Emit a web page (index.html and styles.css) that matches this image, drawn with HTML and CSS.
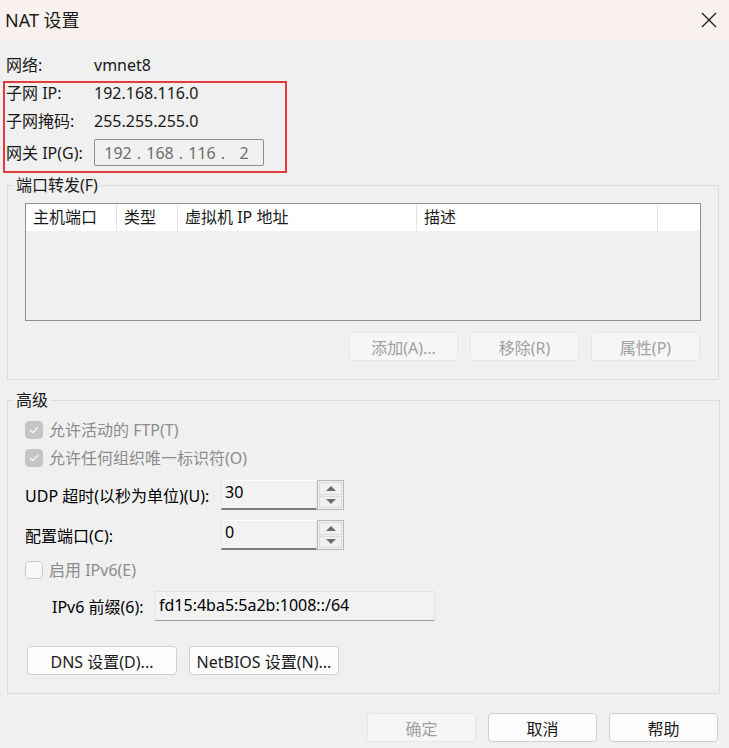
FILE: index.html
```html
<!DOCTYPE html>
<html lang="zh-CN">
<head>
    <meta charset="UTF-8">
    <meta name="viewport" content="width=device-width, initial-scale=1.0">
    <title>NAT 设置</title>
    <link rel="stylesheet" href="styles.css">
</head>
<body>
    <div class="dialog">
        <header class="titlebar">
            <span class="title">NAT 设置</span>
            <button class="close" type="button" aria-label="关闭">
                <svg width="16" height="16" viewBox="0 0 16 16">
                    <path d="M1 1 L15 15 M15 1 L1 15" stroke="#1b1b1b" stroke-width="1.3" fill="none"/>
                </svg>
            </button>
        </header>

        <main class="content">
            <div class="info-row">
                <span class="info-label">网络:</span>
                <span>vmnet8</span>
            </div>

            <div class="highlight">
                <div class="info-row">
                    <span class="info-label">子网 IP:</span>
                    <span>192.168.116.0</span>
                </div>
                <div class="info-row">
                    <span class="info-label">子网掩码:</span>
                    <span>255.255.255.0</span>
                </div>
                <div class="info-row gateway-row">
                    <span class="info-label">网关 IP(G):</span>
                    <div class="ip-box">
                        <span class="octet">192</span><span class="dot">.</span>
                        <span class="octet">168</span><span class="dot">.</span>
                        <span class="octet">116</span><span class="dot">.</span>
                        <span class="octet">2</span>
                    </div>
                </div>
            </div>

            <!-- port forwarding -->
            <fieldset class="group group-ports">
                <legend>端口转发(F)</legend>
                <div class="port-table">
                    <div class="port-head">
                        <div class="col col-port">主机端口</div>
                        <div class="col col-type">类型</div>
                        <div class="col col-ip">虚拟机 IP 地址</div>
                        <div class="col col-desc">描述</div>
                        <div class="col col-rest"></div>
                    </div>
                </div>
                <div class="group-actions">
                    <button class="btn" type="button" disabled>添加(A)...</button>
                    <button class="btn" type="button" disabled>移除(R)</button>
                    <button class="btn" type="button" disabled>属性(P)</button>
                </div>
            </fieldset>

            <!-- advanced -->
            <fieldset class="group group-advanced">
                <legend>高级</legend>

                <label class="check disabled">
                    <span class="box checked">
                        <svg width="10" height="8" viewBox="0 0 10 8"><path d="M1 4 L3.8 6.6 L9 1.2" stroke="#fff" stroke-width="1.2" fill="none"/></svg>
                    </span>
                    允许活动的 FTP(T)
                </label>
                <label class="check disabled check-second">
                    <span class="box checked">
                        <svg width="10" height="8" viewBox="0 0 10 8"><path d="M1 4 L3.8 6.6 L9 1.2" stroke="#fff" stroke-width="1.2" fill="none"/></svg>
                    </span>
                    允许任何组织唯一标识符(O)
                </label>

                <div class="field-row udp-row">
                    <span class="field-label">UDP 超时(以秒为单位)(U):</span>
                    <div class="spin">
                        <div class="spin-input">30</div>
                        <div class="spin-buttons">
                            <span class="spin-btn"><i class="arrow up"></i></span>
                            <span class="spin-btn"><i class="arrow down"></i></span>
                        </div>
                    </div>
                </div>
                <div class="field-row port-row">
                    <span class="field-label">配置端口(C):</span>
                    <div class="spin">
                        <div class="spin-input">0</div>
                        <div class="spin-buttons">
                            <span class="spin-btn"><i class="arrow up"></i></span>
                            <span class="spin-btn"><i class="arrow down"></i></span>
                        </div>
                    </div>
                </div>

                <label class="check disabled check-ipv6">
                    <span class="box"></span>
                    启用 IPv6(E)
                </label>

                <div class="field-row prefix-row">
                    <span class="prefix-label">IPv6 前缀(6):</span>
                    <div class="text-input">fd15:4ba5:5a2b:1008::/64</div>
                </div>

                <div class="group-buttons">
                    <button class="btn btn-wide" type="button">DNS 设置(D)...</button>
                    <button class="btn btn-wide" type="button">NetBIOS 设置(N)...</button>
                </div>
            </fieldset>

            <footer class="dialog-actions">
                <button class="btn" type="button" disabled>确定</button>
                <button class="btn" type="button">取消</button>
                <button class="btn" type="button">帮助</button>
            </footer>
        </main>
    </div>
</body>
</html>
```

FILE: styles.css
```css
* {
    box-sizing: border-box;
}

body {
    margin: 0;
    background-color: #f0f0f0;
    font-family: "Noto Sans", "Noto Sans CJK SC", sans-serif;
    font-size: 16px;
    color: #1a1a1a;
}

.dialog {
    width: 729px;
    height: 748px;
    overflow: hidden;
}

/* title bar */
.titlebar {
    height: 41px;
    background-color: #f9f1ed;
    display: flex;
    align-items: center;
    justify-content: space-between;
    padding: 0 12px 4px 5px;
}

.title {
    font-size: 18px;
}

.close {
    border: none;
    background: none;
    padding: 0;
    width: 16px;
    height: 16px;
    display: flex;
    margin-top: 2px;
}

.content {
    padding: 0 9px 0 7px;
}

/* network info */
.info-row {
    display: flex;
    align-items: center;
    height: 20px;
    line-height: 20px;
    margin-top: 14px;
    margin-left: -1px;
}

.info-label {
    width: 88px;
}

.highlight {
    width: 284px;
    margin-top: 6px;
    margin-left: -4px;
    border: 2px solid #e53b3f;
    padding: 0 0 5px 1px;
}

.highlight .info-row {
    margin-top: 8px;
    margin-left: 0;
}

.highlight .info-row:first-child {
    margin-top: 0;
}

.gateway-row {
    height: 27px !important;
}

.ip-box {
    width: 170px;
    height: 27px;
    border: 1px solid #8e8e8e;
    border-radius: 2px;
    background-color: #f1f1f1;
    color: #6e6e6e;
    display: flex;
    align-items: center;
    padding-left: 9px;
    font-size: 16px;
}

.octet {
    width: 28px;
    text-align: center;
}

.dot {
    width: 14px;
    text-align: center;
}

/* group boxes */
.group {
    margin: 1px 0 0 0;
    padding: 7px 17px 18px;
    border: 1px solid #dcdcdc;
    min-width: 0;
}

.group legend {
    margin-left: -11px;
    padding: 0 2px;
    line-height: 22px;
    font-size: 16px;
}

.group-ports {
    margin-right: 1px;
}

.port-table {
    height: 118px;
    border: 1px solid #8a9098;
    background-color: #f0f0f0;
}

.port-head {
    display: flex;
    height: 27px;
    background-color: #fff;
    line-height: 26px;
}

.col {
    padding-left: 7px;
    border-right: 1px solid #e3e3e3;
}

.col-port { width: 91px; }
.col-type { width: 61px; }
.col-ip { width: 239px; }
.col-desc { width: 241px; }
.col-rest { width: 42px; border-right: none; }

.group-actions {
    display: flex;
    justify-content: flex-end;
    gap: 12px;
    margin-top: 11px;
    padding-right: 1px;
}

/* buttons */
.btn {
    width: 109px;
    height: 29px;
    border: 1px solid #d0d0d0;
    border-radius: 4px;
    background-color: #fdfdfd;
    font-family: inherit;
    font-size: 16px;
    color: #1a1a1a;
    padding: 0;
}

.btn:disabled {
    background-color: #f6f6f6;
    border-color: #e6e6e6;
    color: #a0a0a0;
}

.btn-wide {
    width: 150px;
}

/* advanced group */
.group-advanced {
    margin-top: 9px;
    padding-top: 10px;
}

.check {
    display: flex;
    align-items: center;
    gap: 6px;
    height: 18px;
    line-height: 18px;
}

.check.disabled {
    color: #8c8c8c;
}

.check-second {
    margin-top: 10px;
}

.box {
    width: 18px;
    height: 18px;
    border-radius: 4px;
    border: 1px solid #c9c9c9;
    background-color: #f7f7f7;
    display: flex;
    align-items: center;
    justify-content: center;
}

.box.checked {
    background-color: #c5c5c5;
    border-color: #c5c5c5;
}

.field-row {
    display: flex;
    align-items: center;
}

.udp-row {
    margin-top: 13px;
}

.port-row {
    margin-top: 10px;
}

.field-label {
    width: 196px;
    color: #000;
}

.spin {
    display: flex;
    height: 30px;
}

.spin-input {
    width: 96px;
    height: 30px;
    background-color: #f2f2f2;
    border: 1px solid #e8e8e8;
    border-top-color: #fdfdfd;
    border-bottom: 2px solid #7c7c7c;
    padding: 1px 0 0 3px;
    line-height: 20px;
    color: #000;
}

.spin-buttons {
    width: 27px;
    height: 30px;
    border: 1px solid #b8b8b8;
    display: flex;
    flex-direction: column;
    gap: 1px;
    padding: 1px;
}

.spin-btn {
    flex: 1;
    border: 1px solid #dbdbdb;
    background-color: #f0f0f0;
    display: flex;
    align-items: center;
    justify-content: center;
}

.arrow {
    width: 0;
    height: 0;
    border-left: 5px solid transparent;
    border-right: 5px solid transparent;
}

.arrow.up {
    border-bottom: 5px solid #6c6c6c;
}

.arrow.down {
    border-top: 5px solid #6c6c6c;
}

.check-ipv6 {
    margin-top: 11px;
}

.prefix-row {
    margin-top: 12px;
}

.prefix-label {
    width: 130px;
    padding-left: 27px;
    color: #000;
}

.text-input {
    width: 280px;
    height: 30px;
    background-color: #f2f2f2;
    border: 1px solid #e3e3e3;
    border-bottom-color: #9a9a9a;
    padding-left: 3px;
    line-height: 26px;
    color: #000;
}

.group-buttons {
    display: flex;
    gap: 12px;
    margin-top: 25px;
    padding-left: 2px;
}

/* dialog buttons */
.dialog-actions {
    display: flex;
    justify-content: flex-end;
    gap: 12px;
    margin-top: 19px;
    padding-right: 2px;
}
```
